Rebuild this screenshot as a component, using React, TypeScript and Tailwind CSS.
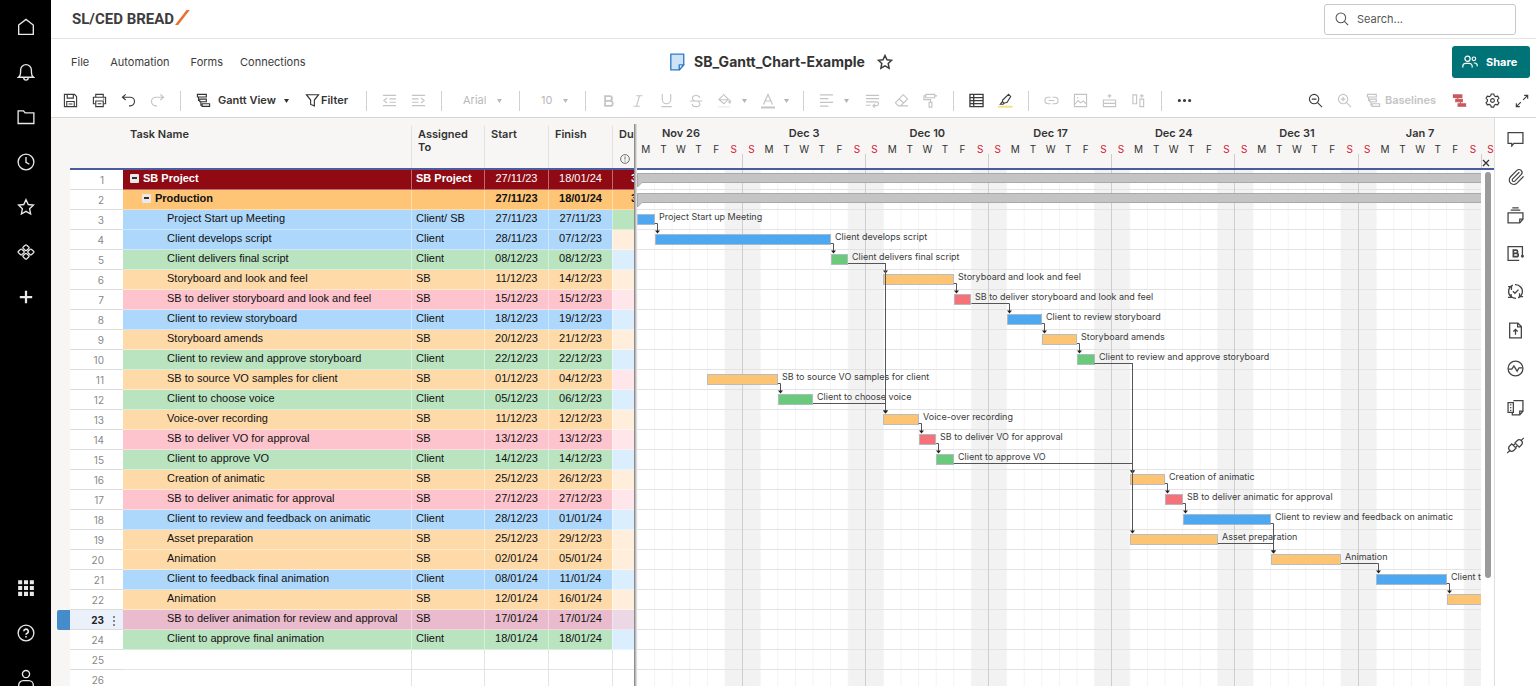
import React from "react";
import { Paperclip } from "lucide-react";

const DAY = 17.6;
const ROW = 20;
const WEEKS = ["Nov 26", "Dec 3", "Dec 10", "Dec 17", "Dec 24", "Dec 31", "Jan 7", "Jan 14", "Jan 21", "Jan 28", "Feb 4", "Feb 11"];
const LETTERS = ["S", "M", "T", "W", "T", "F", "S"];

const FILL = {
  red: "bg-[#8f0a12] text-white",
  gold: "bg-[#ffc576]",
  blue: "bg-[#aed8fb]",
  green: "bg-[#bae4c0]",
  orange: "bg-[#fedaa9]",
  pink: "bg-[#fec4cd]",
  selected: "bg-[#eabbcc]",
  paleOrange: "bg-[#ffeedb]",
  paleBlue: "bg-[#daeefe]",
  palePink: "bg-[#fee6ea]",
  paleSelected: "bg-[#ebd8e4]",
};
type Fill = keyof typeof FILL;

const BAR = { blue: "#4ea8f1", green: "#6bc97b", orange: "#fdc474", pink: "#f57279" };
type Bar = keyof typeof BAR;

type Task = {
  name: string;
  who: string;
  start: string;
  finish: string;
  fill: Fill;
  dur: Fill;
  level: number;
  bar?: Bar;
  day?: number;
  len?: number;
};

const TASKS: Task[] = [
  { name: "SB Project", who: "SB Project", start: "27/11/23", finish: "18/01/24", fill: "red", dur: "red", level: 0 },
  { name: "Production", who: "", start: "27/11/23", finish: "18/01/24", fill: "gold", dur: "gold", level: 1 },
  { name: "Project Start up Meeting", who: "Client/ SB", start: "27/11/23", finish: "27/11/23", fill: "blue", dur: "green", level: 2, bar: "blue", day: 0, len: 1 },
  { name: "Client develops script", who: "Client", start: "28/11/23", finish: "07/12/23", fill: "blue", dur: "paleOrange", level: 2, bar: "blue", day: 1, len: 10 },
  { name: "Client delivers final script", who: "Client", start: "08/12/23", finish: "08/12/23", fill: "green", dur: "paleBlue", level: 2, bar: "green", day: 11, len: 1 },
  { name: "Storyboard and look and feel", who: "SB", start: "11/12/23", finish: "14/12/23", fill: "orange", dur: "paleOrange", level: 2, bar: "orange", day: 14, len: 4 },
  { name: "SB to deliver storyboard and look and feel", who: "SB", start: "15/12/23", finish: "15/12/23", fill: "pink", dur: "palePink", level: 2, bar: "pink", day: 18, len: 1 },
  { name: "Client to review storyboard", who: "Client", start: "18/12/23", finish: "19/12/23", fill: "blue", dur: "paleBlue", level: 2, bar: "blue", day: 21, len: 2 },
  { name: "Storyboard amends", who: "SB", start: "20/12/23", finish: "21/12/23", fill: "orange", dur: "paleOrange", level: 2, bar: "orange", day: 23, len: 2 },
  { name: "Client to review and approve storyboard", who: "Client", start: "22/12/23", finish: "22/12/23", fill: "green", dur: "paleBlue", level: 2, bar: "green", day: 25, len: 1 },
  { name: "SB to source VO samples for client", who: "SB", start: "01/12/23", finish: "04/12/23", fill: "orange", dur: "palePink", level: 2, bar: "orange", day: 4, len: 4 },
  { name: "Client to choose voice", who: "Client", start: "05/12/23", finish: "06/12/23", fill: "green", dur: "paleBlue", level: 2, bar: "green", day: 8, len: 2 },
  { name: "Voice-over recording", who: "SB", start: "11/12/23", finish: "12/12/23", fill: "orange", dur: "paleOrange", level: 2, bar: "orange", day: 14, len: 2 },
  { name: "SB to deliver VO for approval", who: "SB", start: "13/12/23", finish: "13/12/23", fill: "pink", dur: "palePink", level: 2, bar: "pink", day: 16, len: 1 },
  { name: "Client to approve VO", who: "Client", start: "14/12/23", finish: "14/12/23", fill: "green", dur: "paleBlue", level: 2, bar: "green", day: 17, len: 1 },
  { name: "Creation of animatic", who: "SB", start: "25/12/23", finish: "26/12/23", fill: "orange", dur: "paleOrange", level: 2, bar: "orange", day: 28, len: 2 },
  { name: "SB to deliver animatic for approval", who: "SB", start: "27/12/23", finish: "27/12/23", fill: "pink", dur: "palePink", level: 2, bar: "pink", day: 30, len: 1 },
  { name: "Client to review and feedback on animatic", who: "Client", start: "28/12/23", finish: "01/01/24", fill: "blue", dur: "paleBlue", level: 2, bar: "blue", day: 31, len: 5 },
  { name: "Asset preparation", who: "SB", start: "25/12/23", finish: "29/12/23", fill: "orange", dur: "paleOrange", level: 2, bar: "orange", day: 28, len: 5 },
  { name: "Animation", who: "SB", start: "02/01/24", finish: "05/01/24", fill: "orange", dur: "paleOrange", level: 2, bar: "orange", day: 36, len: 4 },
  { name: "Client to feedback final animation", who: "Client", start: "08/01/24", finish: "11/01/24", fill: "blue", dur: "paleBlue", level: 2, bar: "blue", day: 42, len: 4 },
  { name: "Animation", who: "SB", start: "12/01/24", finish: "16/01/24", fill: "orange", dur: "paleOrange", level: 2, bar: "orange", day: 46, len: 5 },
  { name: "SB to deliver animation for review and approval", who: "SB", start: "17/01/24", finish: "17/01/24", fill: "selected", dur: "paleSelected", level: 2, bar: "pink", day: 51, len: 1 },
  { name: "Client to approve final animation", who: "Client", start: "18/01/24", finish: "18/01/24", fill: "green", dur: "paleBlue", level: 2, bar: "green", day: 52, len: 1 },
];
const EMPTY_ROWS = [25, 26, 27, 28, 29, 30, 31, 32, 33, 34, 35, 36, 37, 38, 39, 40];

/* Row numbers of each predecessor and its successor. */
const LINKS: [number, number][] = [
  [3, 4], [4, 5], [5, 6], [5, 13], [6, 7], [7, 8], [8, 9], [9, 10], [11, 12], [12, 13], [13, 14], [14, 15],
  [10, 16], [15, 16], [16, 17], [17, 18], [10, 19], [18, 20], [19, 20], [20, 21], [21, 22], [22, 23], [23, 24],
];

function Icon({ children, size = 16, className = "", w = 1.2 }: { children: React.ReactNode; size?: number; className?: string; w?: number }) {
  return (
    <svg width={size} height={size} viewBox="0 0 16 16" fill="none" stroke="currentColor" strokeWidth={w} className={"shrink-0 " + className} aria-hidden="true">
      {children}
    </svg>
  );
}

function Tool({ label, children, off = false, className = "" }: { label: string; children: React.ReactNode; off?: boolean; className?: string }) {
  return (
    <button type="button" aria-label={label} disabled={off} className={"flex h-8 w-[29px] shrink-0 items-center justify-center " + (off ? "text-[#c4c4c4] " : "text-[#3c3c3c] ") + className}>
      {children}
    </button>
  );
}

function Sep() {
  return (
    <div className="flex w-[17px] shrink-0 justify-center">
      <div className="h-5 w-px bg-[#d0d0d0]" />
    </div>
  );
}

function Caret({ className = "" }: { className?: string }) {
  return (
    <svg width="5" height="4" viewBox="0 0 5 4" fill="currentColor" className={"shrink-0 " + className} aria-hidden="true">
      <path d="M0 0h5L2.500 4z" />
    </svg>
  );
}

const GanttPath = () => (
  <>
    <path d="M1.500 1.500h9.500v2.800H1.500zM4 6.500h7v2.800H4zM6.500 11.500h8v2.800h-8z" />
    <path d="M2.700 4.300v3.600H4M5.200 9.300v3.600h1.300" />
  </>
);

const STAR = "M8 1.500l2 4.300 4.600.5-3.400 3.200.9 4.700L8 11.900l-4.100 2.300.9-4.700L1.400 6.300 6 5.800z";

function Sidebar() {
  const top: [string, React.ReactNode][] = [
    ["Home", <Icon key="i" size={18}><path d="M1.500 6.300L8 1.200l6.500 5.100v8.200h-13z" /></Icon>],
    ["Notifications", <Icon key="i" size={18}><path d="M1.300 12.700c1.500-1 1.900-2.300 1.900-4.200V6.300a4.800 4.800 0 0 1 9.600 0v2.200c0 1.900.4 3.200 1.900 4.200z" /><path d="M6 13.200a2 2 0 0 0 4 0" /></Icon>],
    ["Browse", <Icon key="i" size={18}><path d="M1 2.500h4.800l1.400 1.800H15v9.500H1z" /></Icon>],
    ["Recents", <Icon key="i" size={18}><circle cx="8" cy="8" r="7" /><path d="M8 3.500V8.300l3 1.700" /></Icon>],
    ["Favorites", <Icon key="i" size={18}><path d={STAR} /></Icon>],
    [
      "WorkApps",
      <Icon key="i" size={18} w={1.100}>
        <path d="M7.300 2a1 1 0 0 1 1.400 0l1.700 1.500a1 1 0 0 1 0 1.400L8.700 6.400a1 1 0 0 1-1.400 0L5.600 4.900a1 1 0 0 1 0-1.400zM7.300 9.600a1 1 0 0 1 1.400 0l1.700 1.500a1 1 0 0 1 0 1.400L8.700 14a1 1 0 0 1-1.400 0l-1.700-1.500a1 1 0 0 1 0-1.400zM3 5.800a1 1 0 0 1 1.400 0l1.700 1.500a1 1 0 0 1 0 1.400l-1.700 1.500a1 1 0 0 1-1.400 0L1.300 8.700a1 1 0 0 1 0-1.400zM11.600 5.800a1 1 0 0 1 1.400 0l1.700 1.500a1 1 0 0 1 0 1.400L13 10.200a1 1 0 0 1-1.400 0L9.900 8.700a1 1 0 0 1 0-1.400z" />
      </Icon>,
    ],
    ["Create", <Icon key="i" size={18} w={2}><path d="M8 2.500v11M2.500 8h11" /></Icon>],
  ];
  return (
    <nav className="flex w-[51px] shrink-0 flex-col justify-between overflow-hidden bg-black pt-[5px] text-[#e8e8e8]">
      <div className="flex h-[314px] shrink-0 flex-col">
        {top.map(([label, icon]) => (
          <button key={label} type="button" aria-label={label} className="flex flex-1 items-center justify-center">
            {icon}
          </button>
        ))}
      </div>
      <div className="-mb-[14px] flex shrink-0 flex-col">
        <button type="button" aria-label="Apps" className="flex h-[45px] items-center justify-center">
          <Icon size={18}><path d="M1 1h3.600v3.600H1zM6.200 1h3.600v3.600H6.200zM11.400 1H15v3.600h-3.600zM1 6.200h3.600v3.600H1zM6.200 6.200h3.600v3.600H6.200zM11.400 6.200H15v3.600h-3.600zM1 11.400h3.600V15H1zM6.200 11.400h3.600V15H6.200zM11.400 11.400H15V15h-3.600z" fill="currentColor" stroke="none" /></Icon>
        </button>
        <button type="button" aria-label="Help" className="flex h-[45px] items-center justify-center">
          <Icon size={18}><circle cx="8" cy="8" r="7" /><path d="M6 6.500a2 2 0 1 1 2.800 1.900c-.6.300-.8.600-.8 1.200M8 10.700v1.200" strokeWidth="1.400" /></Icon>
        </button>
        <button type="button" aria-label="Account" className="flex h-[45px] items-center justify-center">
          <Icon size={18}><circle cx="8" cy="4.500" r="3.200" /><path d="M1.500 15.500v-1.200a4 4 0 0 1 4-4h5a4 4 0 0 1 4 4v1.200" /></Icon>
        </button>
      </div>
    </nav>
  );
}

function Header() {
  return (
    <>
      <header className="flex h-[39px] shrink-0 items-center justify-between border-b border-[#e4e4e4] pl-[21px] pr-5">
        <div className="flex items-center">
          <span className="font-['Roboto',sans-serif] text-[15px] leading-4 font-bold text-[#3d3d3f]">SL/CED BREAD</span>
          <svg width="16" height="17" viewBox="0 0 16 17" className="-mt-1" aria-hidden="true">
            <path d="M12.600 1h3.200L4.200 16H1z" fill="#e8702f" />
          </svg>
        </div>
        <div className="flex h-[31px] w-48 items-center gap-2 rounded-[3px] border border-[#c9c9c9] pl-[10px] text-[#555]">
          <Icon size={14}><circle cx="6.700" cy="6.700" r="5.500" /><path d="M10.800 10.800L15 15" /></Icon>
          <input type="search" aria-label="Search" placeholder="Search..." className="w-36 bg-transparent text-[11px] text-[#444] outline-none placeholder:text-[#555]" />
        </div>
      </header>
      <div className="grid h-[45px] shrink-0 grid-cols-[1fr_auto_1fr] items-center pl-5 pr-[6px] pt-px">
        <nav className="flex items-center gap-[21px] text-[11px] text-[#3c3c3c]">
          <a href="#file">File</a>
          <a href="#automation">Automation</a>
          <a href="#forms">Forms</a>
          <a href="#connections" className="-ml-1">Connections</a>
        </nav>
        <div className="mr-10 flex items-center">
          <Icon size={18} className="mr-2"><path d="M2.500 1h11.500v9.500L10 15H2.500z" fill="#cfe3f8" stroke="#2d7cc7" strokeLinejoin="round" /><path d="M14 10.500h-4V15z" fill="#fff" stroke="#2d7cc7" strokeLinejoin="round" /></Icon>
          <h1 className="text-[14px] leading-5 font-bold text-[#333]">SB_Gantt_Chart-Example</h1>
          <button type="button" aria-label="Favorite" className="ml-3 text-[#3c3c3c]">
            <Icon w={1.500}><path d={STAR} /></Icon>
          </button>
        </div>
        <button type="button" className="flex h-8 w-[78px] items-center gap-2 justify-self-end rounded-[3px] bg-[#007377] pl-[10px] text-[11px] font-bold text-white">
          <Icon><circle cx="5.500" cy="4.800" r="2.600" /><path d="M.8 13.500v-1.200a3 3 0 0 1 3-3h3.400a3 3 0 0 1 3 3v1.200" /><circle cx="11.900" cy="4.800" r="1.800" /><path d="M11.800 9h.9a2.500 2.500 0 0 1 2.500 2.500v.8" /></Icon>
          Share
        </button>
      </div>
    </>
  );
}

function Toolbar() {
  return (
    <div role="toolbar" className="flex h-[34px] shrink-0 items-center overflow-hidden border-b border-[#d6d6d6] pl-[5px]">
      <Tool label="Save"><Icon size={15}><path d="M1.500 1.500h10.700l2.300 2.300v10.700h-13z" /><path d="M4.500 1.500v4h6.500v-4M4 14.500V9h8v5.500M6 11.700h4" /></Icon></Tool>
      <Tool label="Print"><Icon size={15}><path d="M4 4.500v-3h8v3M3.800 11.500H1.500v-7h13v7h-2.300" /><path d="M4 8.500h8v6H4zM6 11.500h4M12 6.500h1" /></Icon></Tool>
      <Tool label="Undo"><Icon size={15}><path d="M5 1.500L1.500 4.500 5 7.500M1.500 4.500h8.300a4.600 4.600 0 0 1 0 9.200H8.500" /></Icon></Tool>
      <Tool label="Redo" off><Icon size={15}><path d="M11 1.500l3.500 3-3.500 3M14.500 4.500H6.200a4.600 4.600 0 0 0 0 9.200h1.300" /></Icon></Tool>
      <Sep />
      <button type="button" className="flex h-8 w-[109px] shrink-0 items-center pl-[7px] text-[11px] font-semibold text-[#333]">
        <Icon size={15} className="mr-[7px]"><GanttPath /></Icon>
        Gantt View
        <Caret className="ml-auto mr-[9px]" />
      </button>
      <button type="button" className="flex h-8 w-[60px] shrink-0 items-center pl-[7px] text-[11px] font-semibold text-[#333]">
        <Icon size={15} className="mr-px"><path d="M1.500 1.800h13L10 7.500v6.200l-4-1.500V7.500z" /></Icon>
        Filter
      </button>
      <Sep />
      <Tool label="Outdent" off><Icon size={15}><path d="M1 2.500h14M8 6.200h7M8 9.800h7M1 13.500h14M5.200 5.300L2 8l3.200 2.700" /></Icon></Tool>
      <Tool label="Indent" off><Icon size={15}><path d="M1 2.500h14M1 6.200h7M1 9.800h7M1 13.500h14M10.800 5.300L14 8l-3.200 2.700" /></Icon></Tool>
      <Sep />
      <div className="flex w-[61px] shrink-0 items-center pl-[13px] text-[#b9b9b9]">
        <select aria-label="Font" disabled className="w-[34px] appearance-none bg-transparent text-[11px] opacity-100">
          <option>Arial</option>
        </select>
        <Caret />
      </div>
      <Sep />
      <div className="flex w-[49px] shrink-0 items-center pl-[13px] text-[#b9b9b9]">
        <select aria-label="Font size" disabled className="w-[22px] appearance-none bg-transparent text-[11px] opacity-100">
          <option>10</option>
        </select>
        <Caret />
      </div>
      <Sep />
      <Tool label="Bold" off><Icon size={14} w={2}><path d="M3.500 2.500h5.200a2.700 2.700 0 0 1 0 5.400H3.500zM3.500 7.900h5.900a2.900 2.900 0 0 1 0 5.800H3.500z" /></Icon></Tool>
      <Tool label="Italic" off><Icon size={14}><path d="M6 2h7M3 14h7M9.700 2L6.300 14" /></Icon></Tool>
      <Tool label="Underline" off><Icon size={15}><path d="M3.500 1v6a4.500 4.500 0 0 0 9 0V1M2.500 14.500h11" /></Icon></Tool>
      <Tool label="Strikethrough" off><Icon size={14}><path d="M12.300 4.500C12 2.800 10.500 1.700 8 1.700S3.800 2.900 3.800 4.800c0 1.600 1 2.400 3 3.200M1 8h14M10 8.500c1.700.6 2.500 1.500 2.500 2.900 0 1.900-1.700 3-4.300 3-2.700 0-4.400-1.200-4.700-3.200" /></Icon></Tool>
      <Tool label="Fill color" off><Icon size={15}><path d="M6.500 1.300l5.700 5.500-4.800 4.700L2 6.800l4.500-4.300M2.500 7.200h9M13.600 7.500c1.200 1.700 1.200 3.200 0 3.200s-1.200-1.500 0-3.200z" /><path d="M1 14.800h13" stroke="#e8e8e8" /></Icon></Tool>
      <Caret className="mr-[6px] ml-[3px] text-[#b4b4b4]" />
      <Tool label="Text color" off><Icon size={16}><path d="M3.500 11.500L8 1.500l4.500 10M5 8h6" /><path d="M1 14.500h14" strokeWidth="2" /></Icon></Tool>
      <Caret className="mr-[6px] ml-[2px] text-[#b4b4b4]" />
      <Sep />
      <Tool label="Align" off><Icon size={15}><path d="M1 2h14M1 6h9M1 10h14M1 14h9" /></Icon></Tool>
      <Caret className="mr-[9px] ml-[3px] text-[#b4b4b4]" />
      <Tool label="Wrap text" off><Icon size={15}><path d="M1 2.500h14M1 6h14M1 9.500h11.500a2 2 0 0 1 0 4H9M10.500 11.500l-2 2 2 2M1 13h5" /></Icon></Tool>
      <Tool label="Clear format" off><Icon size={15}><path d="M9.700 1.800l4.800 4.500-7.500 7.400H4.700L1.500 10.500zM5.500 6.200l4.800 4.500M5 13.700h10" /></Icon></Tool>
      <Tool label="Format painter" off><Icon size={15}><path d="M3 1.500h9.500V5H3zM3 3H1v4h7v3M12.500 3H15M6.500 10h3v5h-3z" /></Icon></Tool>
      <Sep />
      <Tool label="Conditional formatting"><Icon size={15} w={1.400}><path d="M1 1.500h14v13H1zM1 5h14M1 8.200h14M1 11.400h14M5 1.500v13" /></Icon></Tool>
      <Tool label="Highlight changes"><Icon size={15}><path d="M5 7.500l6.300-6 2.200 2.200-3.800 6.200-3.200 1-1.800-1.700zM4.700 9.200L2.500 12h3l1-1.100" /><path d="M0 14.600h15.500" stroke="#f6e07c" strokeWidth="2" /></Icon></Tool>
      <Sep />
      <Tool label="Insert link" off><Icon size={15}><path d="M7 4.500H4.500a3.500 3.500 0 0 0 0 7H7M9 4.500h2.500a3.500 3.500 0 0 1 0 7H9M5 8h6" /></Icon></Tool>
      <Tool label="Insert image" off><Icon size={15}><path d="M1.500 1.500h13v13h-13zM2 12l3.500-4 2.500 2.500 3-2 3 3M5 4.300v1.400" /></Icon></Tool>
      <Tool label="Insert row" off><Icon size={15}><path d="M1.500 7.500h13v7h-13zM1.500 11h13M8 1v4M6 3h4" /></Icon></Tool>
      <Tool label="Insert column" off><Icon size={15}><path d="M2 2h4v9.500H2zM9.500 6.500h4v8h-4zM11.500 1v4M9.500 3h4" /></Icon></Tool>
      <Sep />
      <Tool label="More"><Icon size={15}><path d="M2.500 6.300a1.700 1.700 0 1 1 0 3.400 1.700 1.700 0 0 1 0-3.400zM8 6.300a1.700 1.700 0 1 1 0 3.400 1.700 1.700 0 0 1 0-3.400zM13.500 6.300a1.700 1.700 0 1 1 0 3.400 1.700 1.700 0 0 1 0-3.400z" fill="currentColor" stroke="none" /></Icon></Tool>
      <div className="ml-auto flex shrink-0 items-center">
        <Tool label="Zoom out"><Icon size={15}><circle cx="6.500" cy="6.500" r="5" /><path d="M10.200 10.200L15 15M4 6.500h5" /></Icon></Tool>
        <Tool label="Zoom in" off><Icon size={15}><circle cx="6.500" cy="6.500" r="5" /><path d="M10.200 10.200L15 15M4 6.500h5M6.500 4v5" /></Icon></Tool>
        <button type="button" disabled className="flex h-8 w-[86px] shrink-0 items-center pl-[7px] text-[11px] font-semibold text-[#c4c4c4]">
          <Icon size={15} className="mr-1"><GanttPath /></Icon>
          Baselines
        </button>
        <Tool label="Critical path"><Icon size={15} className="text-[#c9595f]"><path d="M1.500 2h9v2.600h-9zM4 6.700h7v2.600H4zM6.500 11.400h8V14h-8z" fill="currentColor" /><path d="M6 4.600v2.100M9 9.300v2.100" /></Icon></Tool>
        <Tool label="Settings" className="ml-1"><Icon size={15}><path d="M6.600 1h2.800l.5 2 1.600.9 2-.6 1.400 2.400-1.500 1.400v1.800l1.500 1.400-1.400 2.400-2-.6-1.600.9-.5 2H6.600l-.5-2-1.600-.9-2 .6-1.400-2.400 1.500-1.400V7.100L1.100 5.700l1.400-2.400 2 .6L6.100 3z" strokeLinejoin="round" /><circle cx="8" cy="8" r="2" /></Icon></Tool>
        <Tool label="Full screen"><Icon size={14} w={1.300}><path d="M10.500 1.500h4v4M14.500 1.500L9.300 6.700M5.500 14.500h-4v-4M1.500 14.500l5.200-5.200" /></Icon></Tool>
      </div>
    </div>
  );
}

const TH = "relative border-b-2 border-[#4a5c9f] p-0 pt-[10px] pl-[7px] align-top text-left leading-[13px] font-semibold";
const CELL = "overflow-hidden border-b border-b-white/40 p-0 align-top whitespace-nowrap";

function Divider() {
  return <span className="absolute top-2 bottom-0 left-0 w-px bg-[#e2e2e2]" />;
}

function Sheet() {
  return (
    <div className="w-[583px] shrink-0 overflow-hidden">
      <table className="w-[583px] table-fixed border-separate border-spacing-0 text-[11px] leading-4 text-[#111]">
        <colgroup>
          <col className="w-[19px]" />
          <col className="w-[53px]" />
          <col className="w-[288px]" />
          <col className="w-[73px]" />
          <col className="w-[64px]" />
          <col className="w-[64px]" />
          <col className="w-[22px]" />
        </colgroup>
        <thead className="bg-[#f7f6f4] text-[11px] text-[#333]">
          <tr className="h-[52px]">
            <td />
            <td className="border-b-2 border-[#4a5c9f]" />
            <th scope="col" className={TH}>Task Name</th>
            <th scope="col" className={TH + " pr-3"}><Divider />Assigned To</th>
            <th scope="col" className={TH}><Divider />Start</th>
            <th scope="col" className={TH}><Divider />Finish</th>
            <th scope="col" className={TH + " overflow-hidden"}>
              <Divider />
              Duration
              <Icon size={10} className="mt-[13px] ml-px block text-[#666]" w={1.500}><circle cx="8" cy="8" r="7" /><path d="M8 4v5M8 10.500v1.700" /></Icon>
            </th>
          </tr>
        </thead>
        <tbody className="font-['Liberation_Sans',Arial,sans-serif]">
          {TASKS.map((t, i) => {
            const n = i + 1;
            const sel = n === 23;
            const c = CELL + " " + FILL[t.fill] + (t.level === 0 ? " font-bold" : "");
            const v = c + " border-l border-l-white/40";
            return (
              <tr key={n} className="h-5">
                <td className="bg-[#f7f6f4] p-0 pl-[6px]">{sel && <div className="h-5 rounded-l-[2px] bg-[#468cca]" />}</td>
                <th scope="row" className={"border-b border-[#dcdcdc] p-0 pt-[2px] font-['Inter',sans-serif] text-[10px] leading-[17px] " + (sel ? "bg-[#eaf1fb] font-bold text-[#222]" : "bg-white font-normal text-[#888]")}>
                  <div className="flex items-center justify-end pr-[19px]">
                    {n}
                    {sel && (
                      <svg width="2" height="10" viewBox="0 0 2 10" fill="#888" className="-mr-[11px] ml-[9px]" aria-hidden="true">
                        <path d="M0 0h2v2H0zM0 4h2v2H0zM0 8h2v2H0z" />
                      </svg>
                    )}
                  </div>
                </th>
                <td className={c + (t.level === 1 ? " font-bold" : "")}>
                  {t.level === 2 ? (
                    <span className="pl-11">{t.name}</span>
                  ) : (
                    <span className={"flex items-center gap-1 " + (t.level === 0 ? "pl-[7px]" : "pl-[19px]")}>
                      <button type="button" aria-label={"Collapse " + t.name} className="flex h-[9px] w-[9px] items-center justify-center rounded-[1px] bg-[#e9e9e9]">
                        <span className="h-[2px] w-[5px] bg-[#333]" />
                      </button>
                      {t.name}
                    </span>
                  )}
                </td>
                <td className={v + " pl-1"}>{t.who}</td>
                <td className={v + " text-center" + (t.level === 0 ? " font-normal!" : t.level === 1 ? " font-bold" : "")}>{t.start}</td>
                <td className={v + " text-center" + (t.level === 0 ? " font-normal!" : t.level === 1 ? " font-bold" : "")}>{t.finish}</td>
                <td className={CELL + " border-l border-l-white/40 pl-[18px] font-bold " + FILL[t.dur]}>{t.level < 2 ? "39d" : ""}</td>
              </tr>
            );
          })}
          {EMPTY_ROWS.map((n) => (
            <tr key={n} className="h-5">
              <td className="bg-[#f7f6f4] p-0" />
              <th scope="row" className="border-b border-[#dcdcdc] p-0 pt-[2px] pr-[19px] text-right font-['Inter',sans-serif] text-[10px] leading-[17px] font-normal text-[#888]">{n}</th>
              <td className="border-b border-[#e4e4e4]" />
              <td className="border-b border-l border-[#e4e4e4]" />
              <td className="border-b border-l border-[#e4e4e4]" />
              <td className="border-b border-l border-[#e4e4e4]" />
              <td className="border-b border-l border-[#e4e4e4]" />
            </tr>
          ))}
        </tbody>
      </table>
    </div>
  );
}

function Chart() {
  const width = WEEKS.length * 7 * DAY;
  const rows = TASKS.length + EMPTY_ROWS.length;
  const height = rows * ROW;
  const task = (n: number) => TASKS[n - 1];
  return (
    <svg width={width} height={height} className="shrink-0" role="img" aria-label="Gantt chart">
      {WEEKS.map((w, i) => (
        <g key={w}>
          <rect x={(i * 7 + 5) * DAY} y="0" width={DAY * 2} height={height} fill="#f2f2f2" />
          {LETTERS.map((_, d) => (
            <line key={d} x1={(i * 7 + d) * DAY} x2={(i * 7 + d) * DAY} y1="0" y2={height} stroke="#f4f4f4" />
          ))}
        </g>
      ))}
      {Array.from({ length: rows }, (_, i) => (
        <line key={i} x1="0" x2={width} y1={i * ROW + 19.5} y2={i * ROW + 19.5} stroke="#e3e3e3" />
      ))}
      {WEEKS.map((w, i) => (
        <line key={w} x1={Math.round((i * 7 + 6) * DAY) - 0.5} x2={Math.round((i * 7 + 6) * DAY) - 0.5} y1="0" y2={height} stroke="#cdcdcd" />
      ))}
      {[0, 1].map((i) => (
        <path key={i} d={`M0.5 ${i * ROW + 3.5}H${53 * DAY}V${i * ROW + 12.5}H5L0.5 ${i * ROW + 17}z`} fill="#c4c4c4" stroke="#a9a9a9" />
      ))}
      {TASKS.map((t, i) => {
        if (!t.bar) return null;
        const x = Math.round(t.day! * DAY);
        const end = Math.round((t.day! + t.len!) * DAY);
        return (
          <g key={i}>
            <rect x={x + 0.5} y={i * ROW + 4.5} width={end - x - 1} height="10" fill={BAR[t.bar]} stroke="#a8b4c0" strokeOpacity="0.8" />
            <text x={end + 4} y={i * ROW + 10} fontSize="9" fill="#3c3c3c">
              {t.name}
            </text>
          </g>
        );
      })}
      {LINKS.map(([a, b]) => {
        const x0 = (task(a).day! + task(a).len!) * DAY;
        const x1 = Math.round(task(b).day! * DAY + 3) - 0.5;
        const y0 = (a - 1) * ROW + 13.5;
        const y1 = (b - 1) * ROW + 2;
        return (
          <g key={a + "-" + b}>
            <path d={`M${x0} ${y0}H${x1}V${y1}`} fill="none" stroke="#555" />
            <path d={`M${x1 - 2.5} ${y1 - 1.5}h5l-2.5 3z`} fill="#222" />
          </g>
        );
      })}
    </svg>
  );
}

function Gantt() {
  return (
    <div className="flex min-w-0 flex-1 flex-col">
      <div className="relative h-[52px] shrink-0 overflow-hidden border-b-2 border-[#4a5c9f] bg-[#f7f6f4] text-[#333]">
        <div className="flex" style={{ marginLeft: -DAY }}>
          {WEEKS.map((w) => (
            <div key={w} className="relative shrink-0 pt-[9px]" style={{ width: 7 * DAY }}>
              <div className="text-center text-[11px] leading-3 font-semibold">{w}</div>
              <div className="mt-1 grid grid-cols-7 text-center text-[10px] leading-3">
                {LETTERS.map((l, i) => (
                  <span key={i} className={i === 0 || i === 6 ? "text-[#d02236]" : ""}>{l}</span>
                ))}
              </div>
              <span className="absolute top-9 -left-px h-4 w-px bg-[#cdcdcd]" />
            </div>
          ))}
        </div>
        <button type="button" aria-label="Close chart" className="absolute right-1 bottom-px text-[#333]">
          <Icon size={8} w={2.500}><path d="M2 2l12 12M14 2L2 14" /></Icon>
        </button>
      </div>
      <div className="flex min-h-0 flex-1">
        <div className="min-w-0 flex-1 overflow-hidden bg-white">
          <Chart />
        </div>
        <div className="w-[13px] shrink-0 bg-white pt-[2px] pl-1">
          <div className="h-[79%] w-[6px] rounded-full bg-[#9b9b9b]" />
        </div>
      </div>
    </div>
  );
}

function Rail() {
  const items: [string, React.ReactNode][] = [
    ["Conversations", <path key="p" d="M1 2.500h14v10H6.500l-2 2.500v-2.500H1z" />],
    ["Attachments", null],
    ["Proofs", <><path d="M1 5.500h14v6L12 15H1z" /><path d="M15 11.500h-3V15M3.500 3h9M5 .8h6" /></>],
    ["Brandfolder", <><path d="M14.500 6V1.500H1v13h10.500M14.500 6v4" /><circle cx="14.500" cy="10.500" r=".8" fill="currentColor" /><path d="M6 4.800h2.500a1.500 1.500 0 0 1 0 3H6zM6 7.800h3a1.600 1.600 0 0 1 0 3.200H6z" strokeWidth="1.600" /></>],
    ["Update requests", <><path d="M3.300 12.500A6.500 6.500 0 0 1 5.500 2M7.500 1.500A6.500 6.500 0 0 1 13 4M12.700 3.500A6.500 6.500 0 0 1 10.500 14M8.500 14.500A6.500 6.500 0 0 1 3 12" /><path d="M.9 13.500h3v-3.200M15.100 12.800h-3.300v-3.200M1 3.500h3.200v3" /><path d="M5.500 7.700l2 2 3.300-3.500" /></>],
    ["Publish", <><path d="M2.500 1h7.800L13.500 4.300V15h-11zM10 1v3.500h3.500" /><path d="M8 12V7.200M6 9l2-2 2 2" /></>],
    ["Activity log", <><circle cx="8" cy="8" r="7" /><path d="M1.500 8.500h3L6.500 5.500l3 5 1.800-3h3" /></>],
    ["Summary", <><path d="M6 1.500h9v10L12 15H5v-2.500M15 11.500h-3V15" /><path d="M1 3.500h5v9H1zM3.500 5v1.200M3.500 7.500v1.200M3.500 10v1.200" /></>],
    ["Connectors", <path key="p" d="M7.500 5.500l2-2a2.800 2.800 0 0 1 4 4l-2 2zM8.500 10.500l-2 2a2.800 2.800 0 0 1-4-4l2-2zM13.500 3.200L15.800.8M2.500 12.800L.2 15.200M6 8l1.500-1.500M8 10l1.500-1.500" />],
  ];
  return (
    <aside className="w-[42px] shrink-0 border-l border-[#dedede] bg-white pt-px">
      <div className="flex h-[346px] flex-col">
        {items.map(([label, d]) => (
          <button key={label} type="button" aria-label={label} className="flex flex-1 items-center justify-center text-[#444]">
            {d ? <Icon size={17}>{d}</Icon> : <Paperclip size={18} strokeWidth={1.6} />}
          </button>
        ))}
      </div>
    </aside>
  );
}

export default function App() {
  return (
    <div className="flex h-screen overflow-hidden bg-white font-['Inter',sans-serif] text-[#333]">
      <Sidebar />
      <div className="flex min-w-0 flex-1 flex-col">
        <Header />
        <Toolbar />
        <main className="flex min-h-0 flex-1 overflow-hidden">
          <Sheet />
          <div className="w-[3px] shrink-0 bg-[#f7f6f4] pt-[6px]">
            <div className="h-full border-r border-l border-r-[#dcdcdc] border-l-[#8e8e8e] bg-[#b9b9b9]" />
          </div>
          <Gantt />
          <Rail />
        </main>
      </div>
    </div>
  );
}
